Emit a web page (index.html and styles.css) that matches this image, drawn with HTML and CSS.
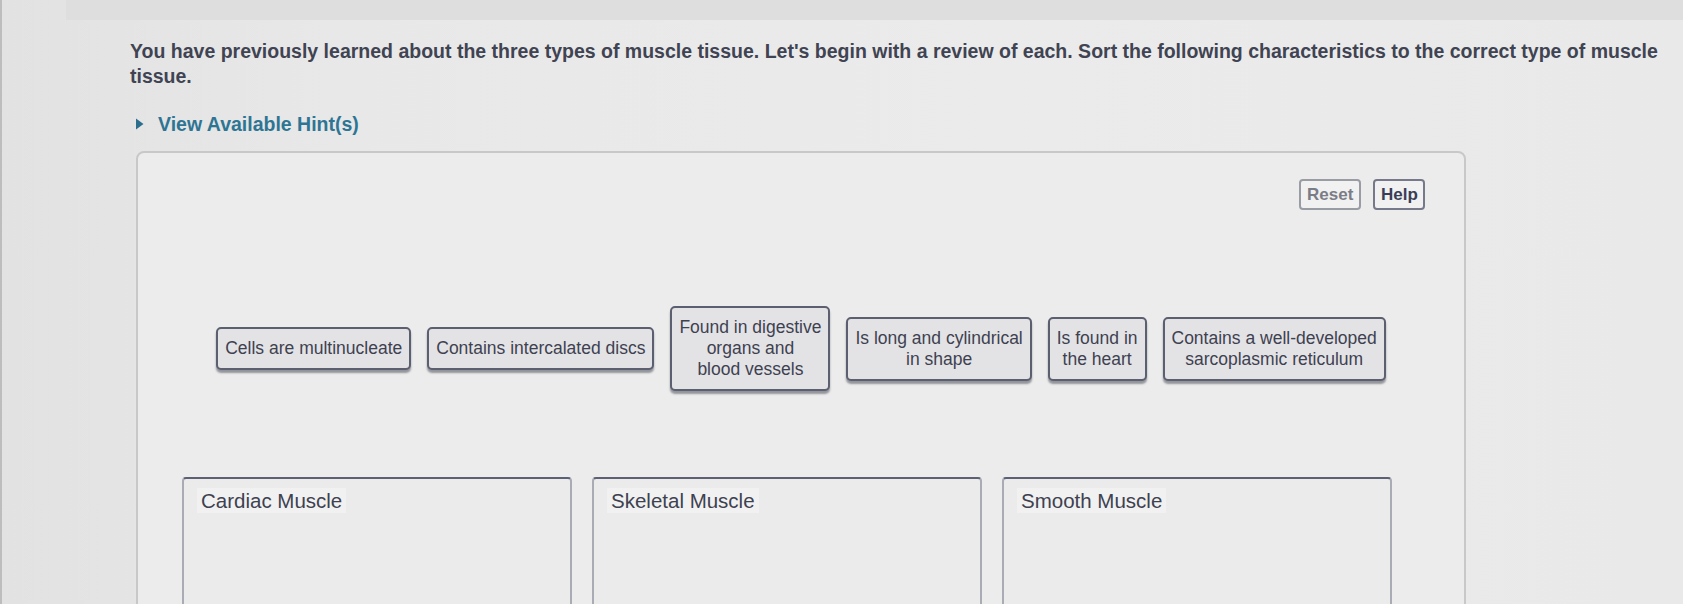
FILE: index.html
```html
<!DOCTYPE html>
<html lang="en">
<head>
<meta charset="utf-8">
<title>Muscle tissue sorting</title>
<link rel="stylesheet" href="styles.css">
</head>
<body>
<div class="topband"></div>
<main class="page">
  <p class="prompt">You have previously learned about the three types of muscle tissue. Let's begin with a review of each. Sort the following characteristics to the correct type of muscle tissue.</p>
  <div class="hint">
    <svg class="hint-arrow" width="9" height="12" viewBox="0 0 9 12"><path d="M1 0.5 L8.5 6 L1 11.5 Z" fill="#2b6f8e"/></svg>
    <span class="hint-text">View Available Hint(s)</span>
  </div>
  <section class="panel">
    <div class="toolbar">
      <button class="btn btn-reset">Reset</button>
      <button class="btn btn-help">Help</button>
    </div>
    <div class="chips">
      <div class="chip">Cells are multinucleate</div>
      <div class="chip">Contains intercalated discs</div>
      <div class="chip">Found in digestive<br>organs and<br>blood vessels</div>
      <div class="chip">Is long and cylindrical<br>in shape</div>
      <div class="chip">Is found in<br>the heart</div>
      <div class="chip">Contains a well-developed<br>sarcoplasmic reticulum</div>
    </div>
    <div class="bins">
      <div class="bin"><span class="bin-title">Cardiac Muscle</span></div>
      <div class="bin"><span class="bin-title">Skeletal Muscle</span></div>
      <div class="bin"><span class="bin-title">Smooth Muscle</span></div>
    </div>
  </section>
</main>
</body>
</html>
```
FILE: styles.css
```css
html, body {
  margin: 0;
  padding: 0;
}
body {
  background: linear-gradient(90deg, #e2e2e2 0%, #e8e8e8 20%, #ebebeb 60%, #e9e9e9 100%);
  font-family: "Liberation Sans", Arial, sans-serif;
  color: #3d4150;
  height: 604px;
  overflow: hidden;
  border-left: 2px solid #bdbdbd;
  box-sizing: border-box;
}
.topband {
  height: 20px;
  margin-left: 64px;
  background: #dedede;
}
.page {
  padding: 19px 0 0 128px;
}
.prompt {
  margin: 0;
  width: 1545px;
  font-size: 19.5px;
  font-weight: bold;
  line-height: 25px;
  color: #3f4352;
}
.hint {
  display: flex;
  align-items: center;
  gap: 14px;
  margin: 23px 0 0 5px;
  height: 24px;
}
.hint-arrow {
  display: block;
}
.hint-text {
  font-size: 19.5px;
  font-weight: bold;
  color: #2e7594;
}
.panel {
  margin: 15px 0 0 6px;
  width: 1330px;
  height: 520px;
  box-sizing: border-box;
  border: 2px solid #c8c8c8;
  border-radius: 8px;
  background: #ececec;
}
.toolbar {
  display: flex;
  justify-content: flex-end;
  gap: 12px;
  padding: 26px 39px 0 0;
}
.btn {
  font-family: "Liberation Sans", Arial, sans-serif;
  font-size: 17px;
  font-weight: bold;
  height: 31px;
  padding: 0 6px;
  border: 2px solid #9a9ca4;
  border-radius: 4px;
  background: #f1f1f1;
}
.btn-reset {
  color: #7b7d86;
  width: 62px;
}
.btn-help {
  color: #3a3d58;
  border-color: #767989;
  width: 52px;
}
.chips {
  display: flex;
  justify-content: center;
  align-items: center;
  gap: 16px;
  margin-top: 96px;
  height: 85px;
}
.chip {
  white-space: nowrap;
  text-align: center;
  font-size: 17.5px;
  line-height: 21px;
  color: #3e4150;
  background: #e3e3e6;
  border: 2px solid #5b5f70;
  border-radius: 5px;
  padding: 9px 7px;
  box-shadow: 0 3px 2px rgba(40, 42, 55, 0.45);
}
.bins {
  display: flex;
  gap: 20px;
  margin-top: 86px;
  padding-left: 44px;
}
.bin {
  width: 390px;
  height: 200px;
  box-sizing: border-box;
  border: 2px solid #a9abb5;
  border-top-color: #5c6075;
  border-radius: 4px;
  background: #ebebeb;
  padding: 9px 0 0 13px;
}
.bin-title {
  display: inline-block;
  font-size: 20.5px;
  line-height: 25px;
  padding: 0 4px;
  color: #3e4150;
  background: #f1f1f1;
}
```
